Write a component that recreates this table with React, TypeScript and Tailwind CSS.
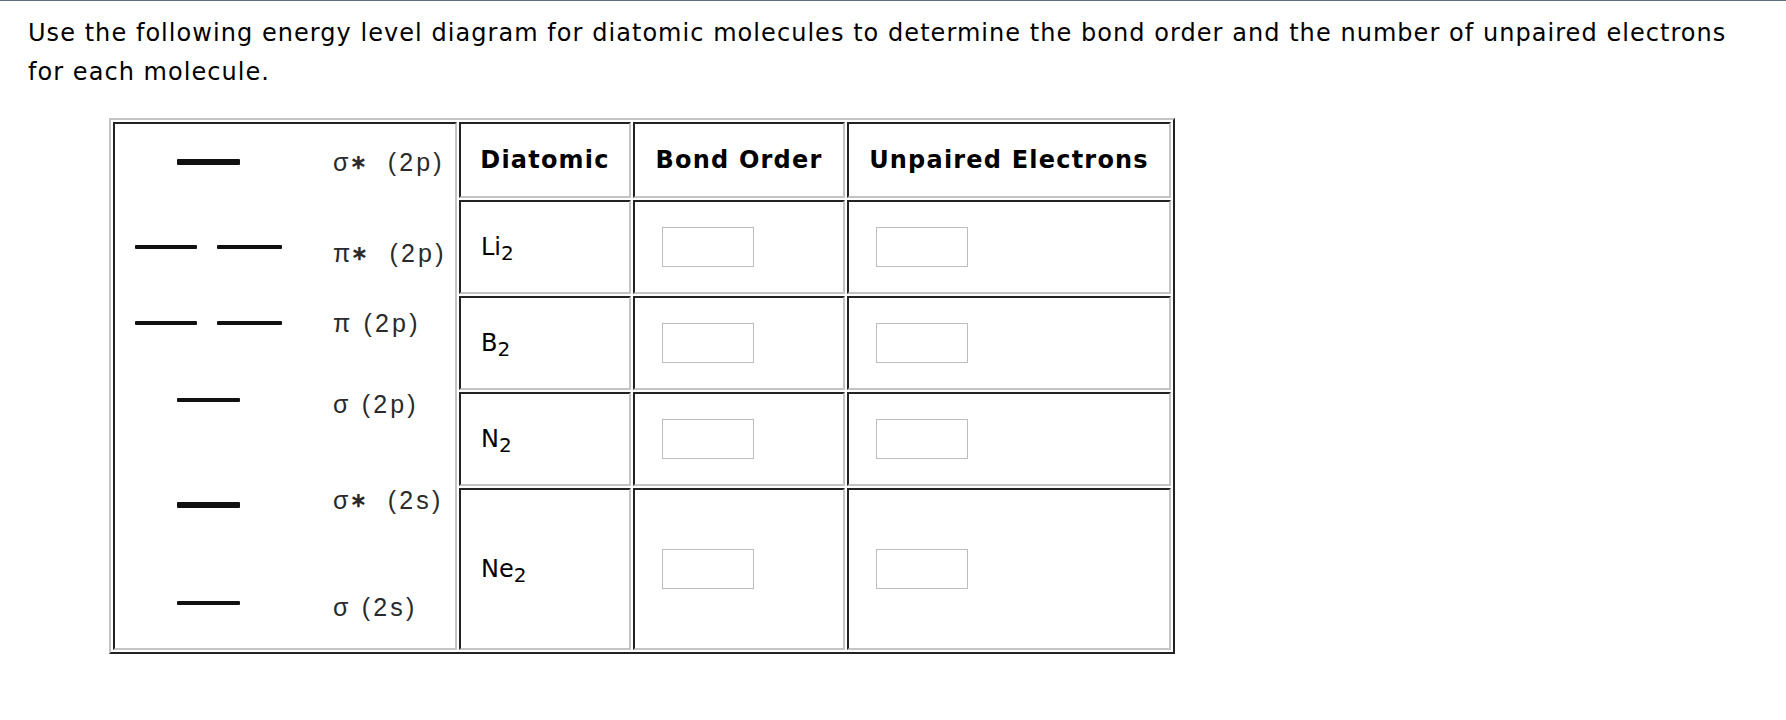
const cellBorder =
  "border-2 border-t-[#222222] border-l-[#222222] border-r-[#c4c4c4] border-b-[#c4c4c4] bg-white";

type Level = {
  sym: string;
  star?: boolean;
  orbital: string;
  double?: boolean;
  thick?: boolean;
  gap: string;
  labelPad: string;
};

const levels: Level[] = [
  { sym: "σ", star: true, orbital: "(2p)", thick: true, gap: "mt-[18px]", labelPad: "" },
  { sym: "π", star: true, orbital: "(2p)", double: true, gap: "mt-[45px]", labelPad: "pt-[12px]" },
  { sym: "π", orbital: "(2p)", double: true, gap: "mt-[36px]", labelPad: "" },
  { sym: "σ", orbital: "(2p)", gap: "mt-[37px]", labelPad: "pt-[8px]" },
  { sym: "σ", star: true, orbital: "(2s)", thick: true, gap: "mt-[65px]", labelPad: "pb-[10px]" },
  { sym: "σ", orbital: "(2s)", gap: "mt-[58px]", labelPad: "pt-[8px]" },
];

const molecules = ["Li", "B", "N", "Ne"];

function EnergyLine({ thick, width }: { thick?: boolean; width: string }) {
  return <div className={`${width} ${thick ? "h-[6px]" : "h-[4px]"} rounded-[1px] bg-[#111111]`} />;
}

function Diagram() {
  return (
    <div className={`${cellBorder} row-span-5 flex flex-col`}>
      {levels.map((level, i) => (
        <div key={i} className={`flex h-[40px] items-center ${level.gap}`}>
          <div className="ml-[20px] flex w-[147px] justify-center gap-[20px]">
            {level.double ? (
              <>
                <EnergyLine width="w-[62px]" />
                <EnergyLine width="w-[65px]" />
              </>
            ) : (
              <EnergyLine thick={level.thick} width="w-[63px]" />
            )}
          </div>
          <div
            className={`ml-[51px] flex items-center whitespace-nowrap font-['Liberation_Sans',Arial,sans-serif] text-[25px] leading-none tracking-[3.2px] text-[#2a2a2a] ${level.labelPad}`}
          >
            <span>{level.sym}</span>
            {level.star ? (
              <span className="ml-[-2px] w-[20px] text-[20px] font-bold">∗</span>
            ) : null}
            <span className={level.star ? "ml-[18px]" : "ml-[10px]"}>{level.orbital}</span>
          </div>
        </div>
      ))}
    </div>
  );
}

function AnswerBox() {
  return <input type="text" className="h-[40px] w-[92px] border border-[#bdbdbd] bg-white outline-none" />;
}

export default function App() {
  return (
    <div className="min-h-screen border-t border-[#5b7083] bg-white font-['DejaVu_Sans',Verdana,sans-serif] text-black">
      <p className="pl-[28px] pr-[30px] pt-[13px] text-[24px] leading-[39px] tracking-[1.05px]">
        Use the following energy level diagram for diatomic molecules to determine the bond order and the number of
        unpaired electrons for each molecule.
      </p>

      <div className="ml-[109px] mt-[26px] w-fit border-2 border-t-[#c4c4c4] border-l-[#c4c4c4] border-r-[#222222] border-b-[#222222] p-[2px]">
        <div className="grid grid-cols-[344px_172px_212px_324px] grid-rows-[76px_94px_94px_94px_162px] gap-[2px]">
          <Diagram />
          <div className={`${cellBorder} flex items-center justify-center text-[24px] font-bold tracking-[1.2px]`}>
            Diatomic
          </div>
          <div className={`${cellBorder} flex items-center justify-center text-[24px] font-bold tracking-[1.2px]`}>
            Bond Order
          </div>
          <div className={`${cellBorder} flex items-center justify-center text-[24px] font-bold tracking-[1.2px]`}>
            Unpaired Electrons
          </div>

          {molecules.map((m) => (
            <div key={m} className="contents">
              <div className={`${cellBorder} flex items-center pl-[20px] text-[24px]`}>
                <span>
                  {m}
                  <sub className="text-[20px]">2</sub>
                </span>
              </div>
              <div className={`${cellBorder} flex items-center pl-[27px]`}>
                <AnswerBox />
              </div>
              <div className={`${cellBorder} flex items-center pl-[27px]`}>
                <AnswerBox />
              </div>
            </div>
          ))}
        </div>
      </div>
    </div>
  );
}
